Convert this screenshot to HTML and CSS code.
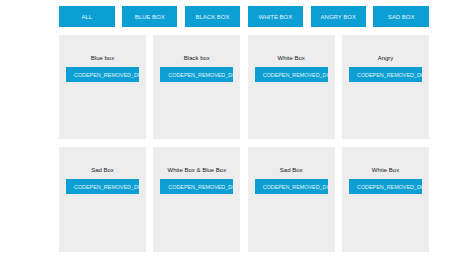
FILE: index.html
```html
<!DOCTYPE html>
<html>
<head>
<meta charset="utf-8">
<link rel="stylesheet" href="styles.css">
</head>
<body>
<div class="wrap">
  <div class="filters">
    <button class="filter">ALL</button>
    <button class="filter">BLUE BOX</button>
    <button class="filter">BLACK BOX</button>
    <button class="filter">WHITE BOX</button>
    <button class="filter">ANGRY BOX</button>
    <button class="filter">SAD BOX</button>
  </div>
  <div class="grid">
    <div class="card"><div class="title">Blue box</div><div class="btn"><span>CODEPEN_REMOVED_DOM</span></div></div>
    <div class="card"><div class="title">Black box</div><div class="btn"><span>CODEPEN_REMOVED_DOM</span></div></div>
    <div class="card"><div class="title">White Box</div><div class="btn"><span>CODEPEN_REMOVED_DOM</span></div></div>
    <div class="card"><div class="title">Angry</div><div class="btn"><span>CODEPEN_REMOVED_DOM</span></div></div>
    <div class="card"><div class="title">Sad Box</div><div class="btn"><span>CODEPEN_REMOVED_DOM</span></div></div>
    <div class="card"><div class="title">White Box &amp; Blue Box</div><div class="btn"><span>CODEPEN_REMOVED_DOM</span></div></div>
    <div class="card"><div class="title">Sad Box</div><div class="btn"><span>CODEPEN_REMOVED_DOM</span></div></div>
    <div class="card"><div class="title">White Box</div><div class="btn"><span>CODEPEN_REMOVED_DOM</span></div></div>
  </div>
</div>
</body>
</html>
```

FILE: styles.css
```css
html, body {
  margin: 0;
  padding: 0;
  background: #ffffff;
  font-family: "Liberation Sans", Arial, sans-serif;
}
.wrap {
  width: 370px;
  margin-left: 59px;
  padding-top: 6px;
}
.filters {
  display: flex;
  justify-content: space-between;
}
.filter {
  width: 55.5px;
  height: 21px;
  border: 0;
  margin: 0;
  padding: 0;
  background: #0c9fd3;
  color: #e3f3fa;
  font-family: "Liberation Sans", Arial, sans-serif;
  font-size: 6px;
  text-align: center;
}
.grid {
  margin-top: 8px;
  display: grid;
  grid-template-columns: repeat(4, 87px);
  grid-template-rows: 104px 105px;
  column-gap: 7.33px;
  row-gap: 8px;
}
.card {
  background: #ededed;
  padding: 20px 7px 0 7px;
  display: flex;
  flex-direction: column;
  align-items: stretch;
}
.title {
  font-size: 6px;
  line-height: 7px;
  color: #222;
  text-align: center;
}
.btn {
  margin-top: 5px;
  width: 75px;
  height: 15px;
  overflow: hidden;
  position: relative;
  display: flex;
  align-items: center;
}
.btn::before {
  content: "";
  position: absolute;
  left: 0;
  top: 0;
  width: 73px;
  height: 15px;
  background: #0c9fd3;
}
.btn span {
  position: relative;
  padding-left: 8px;
  font-size: 5.4px;
  color: #e3f3fa;
  white-space: nowrap;
}
```
